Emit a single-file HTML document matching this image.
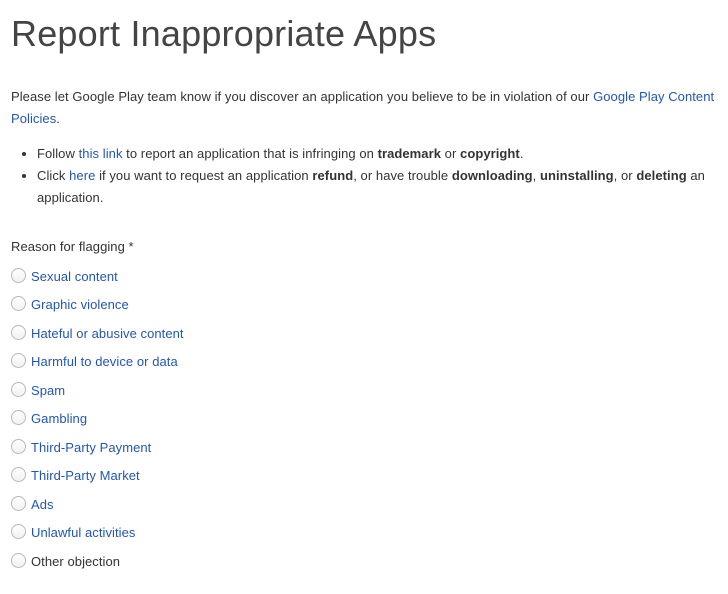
<!DOCTYPE html>
<html><head><style>
body{margin:0;background:#fff;font-family:"Liberation Sans",Arial,sans-serif;color:#333;font-size:13px;letter-spacing:0.06px}
.w{position:absolute;left:11px;top:0;width:712px}
h1{position:absolute;left:0;top:12px;margin:0;font-weight:normal;font-size:36px;letter-spacing:0.2px;color:#444;line-height:44px;white-space:nowrap}
a{color:#2157b5;text-decoration:none}
.p{position:absolute;left:0;top:86px;line-height:22px;width:712px}
ul{position:absolute;left:0;top:143px;margin:0;padding-left:26px;line-height:22px;width:686px}
li{margin:0}
.r{position:absolute;left:0;top:236px;line-height:22px}
.o{position:absolute;left:0;height:22px;line-height:22px;white-space:nowrap}
.c{display:inline-block;width:15px;height:15px;border:1px solid #b8b8b8;border-radius:50%;vertical-align:-2px;margin-right:5px;box-sizing:border-box;background:linear-gradient(#fff,#f2f2f2)}
</style></head><body><div class="w">
<h1>Report Inappropriate Apps</h1>
<div class="p">Please let Google Play team know if you discover an application you believe to be in violation of our <a>Google Play Content Policies</a>.</div>
<ul><li>Follow <a>this link</a> to report an application that is infringing on <b>trademark</b> or <b>copyright</b>.</li>
<li>Click <a>here</a> if you want to request an application <b>refund</b>, or have trouble <b>downloading</b>, <b>uninstalling</b>, or <b>deleting</b> an application.</li></ul>
<div class="r">Reason for flagging *</div>
<div class="o" style="top:266px"><span class="c"></span><a>Sexual content</a></div>
<div class="o" style="top:294px"><span class="c"></span><a>Graphic violence</a></div>
<div class="o" style="top:323px"><span class="c"></span><a>Hateful or abusive content</a></div>
<div class="o" style="top:351px"><span class="c"></span><a>Harmful to device or data</a></div>
<div class="o" style="top:380px"><span class="c"></span><a>Spam</a></div>
<div class="o" style="top:408px"><span class="c"></span><a>Gambling</a></div>
<div class="o" style="top:437px"><span class="c"></span><a>Third-Party Payment</a></div>
<div class="o" style="top:465px"><span class="c"></span><a>Third-Party Market</a></div>
<div class="o" style="top:494px"><span class="c"></span><a>Ads</a></div>
<div class="o" style="top:522px"><span class="c"></span><a>Unlawful activities</a></div>
<div class="o" style="top:551px"><span class="c"></span>Other objection</div>
</div></body></html>
